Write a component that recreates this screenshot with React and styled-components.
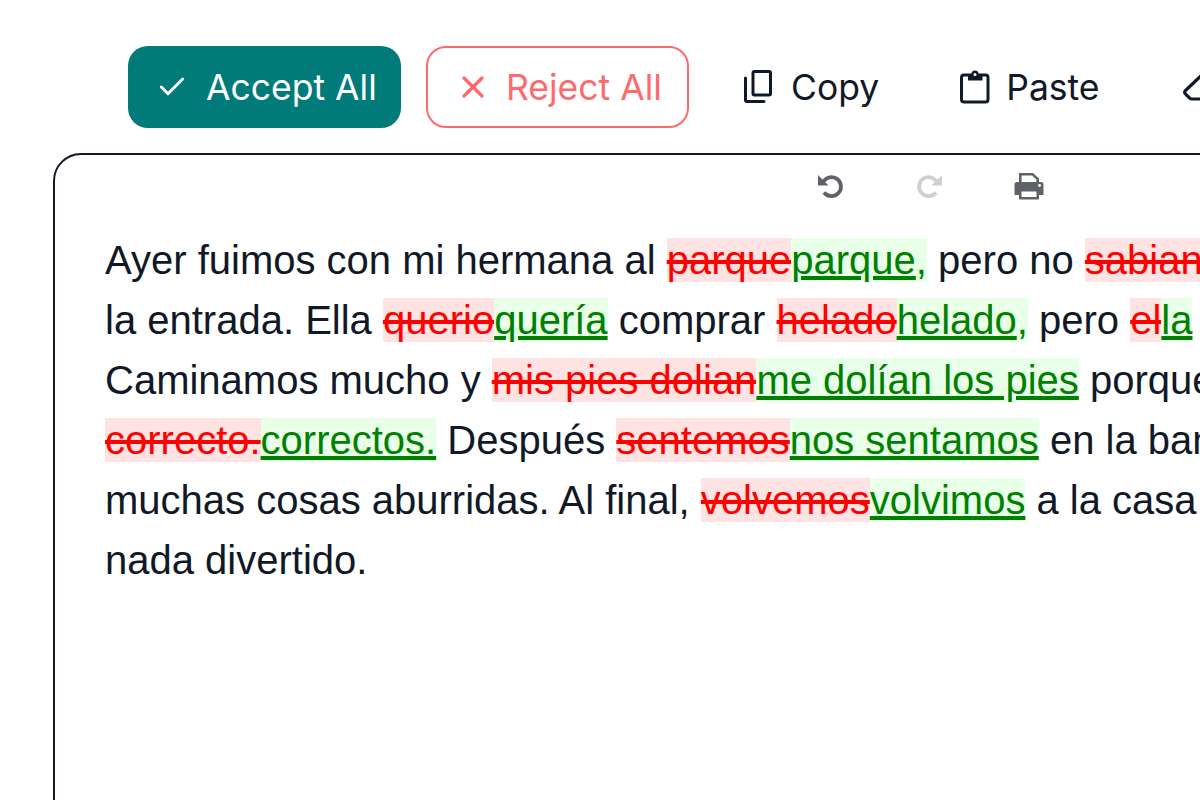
import React from 'react'
import styled, { createGlobalStyle } from 'styled-components'
import { Check, X } from 'lucide-react'

const GlobalStyle = createGlobalStyle`
  html, body {
    margin: 0;
    width: 1200px;
    height: 800px;
    overflow: hidden;
    background: #fff;
  }
`

const lines = [
  ['Ayer fuimos con mi hermana al ', { del: 'parque', ins: 'parque', tail: ',' }, ' pero no ', { del: 'sabian', ins: 'sabíamos' }],
  ['la entrada. Ella ', { del: 'querio', ins: 'quería' }, ' comprar ', { del: 'helado', ins: 'helado', tail: ',' }, ' pero ', { del: 'el', ins: 'la' }],
  ['Caminamos mucho y ', { del: 'mis pies dolian', ins: 'me dolían los pies' }, ' porque'],
  [{ del: 'correcto.', ins: 'correctos.' }, ' Después ', { del: 'sentemos', ins: 'nos sentamos' }, ' en la banca'],
  ['muchas cosas aburridas. Al final, ', { del: 'volvemos', ins: 'volvimos' }, ' a la casa'],
  ['nada divertido.'],
]

function CopyIcon() {
  return (
    <svg width="28" height="34" viewBox="0 0 28 34" fill="none" stroke="#111827" strokeWidth="3" strokeLinejoin="round" strokeLinecap="round">
      <rect x="9" y="1.500" width="17.500" height="23.500" rx="1.500" />
      <path d="M1.500 8v22a1.500 1.500 0 0 0 1.500 1.500H20" />
    </svg>
  )
}

function PasteIcon() {
  return (
    <svg width="30" height="34" viewBox="0 0 30 34" fill="none">
      <rect x="1.500" y="5" width="26.500" height="27" rx="2.500" stroke="#111827" strokeWidth="3" />
      <path d="M8 4h3.500a3.500 3.500 0 0 1 7 0H22.500v6.500H8z" fill="#111827" />
      <circle cx="15" cy="4.500" r="1.500" fill="#fff" />
    </svg>
  )
}

function EraserIcon() {
  return (
    <svg width="36" height="34" viewBox="0 0 36 34" fill="none" stroke="#111827" strokeWidth="3.200" strokeLinecap="round" strokeLinejoin="round">
      <path d="M24 2L4.500 20.500a2.500 2.500 0 0 0 0 3.500L8.500 28a3 3 0 0 0 2 1H34" />
    </svg>
  )
}

function UndoIcon({ color }) {
  return (
    <svg width="28" height="28" viewBox="0 0 28 28" fill="none">
      <path d="M6.500 11.500a9.500 9.500 0 1 1 1.500 9" stroke={color} strokeWidth="3.800" />
      <path d="M2 3v10.500h10.500z" fill={color} />
    </svg>
  )
}

function PrintIcon() {
  return (
    <svg width="30" height="28" viewBox="0 0 30 28">
      <path d="M5 11V1h14l6 5.500V11h-2.600V7.500L18 3.600H7.600V11z" fill="#5f6368" />
      <path d="M3 10h24a2.500 2.500 0 0 1 2.500 2.500V23H24v-5H6v5H.5V12.500A2.500 2.500 0 0 1 3 10z" fill="#5f6368" />
      <path d="M5 18h20v8.500a1 1 0 0 1-1 1H6a1 1 0 0 1-1-1z" fill="#5f6368" />
      <path d="M7.500 19.500h15v5.500h-15z" fill="#fff" />
      <circle cx="25.500" cy="13.500" r="1.400" fill="#fff" />
    </svg>
  )
}

export default function App() {
  return (
    <Page>
      <GlobalStyle />
      <Toolbar>
        <AcceptButton><Check size={32} strokeWidth={2.2} /> Accept All</AcceptButton>
        <RejectButton><X size={36} strokeWidth={2.2} /> Reject All</RejectButton>
        <PlainButton $gap={19}><CopyIcon /> Copy</PlainButton>
        <PlainButton $gap={16}><PasteIcon /> Paste</PlainButton>
        <PlainButton $gap={19}><EraserIcon /> Clear</PlainButton>
      </Toolbar>
      <Editor>
        <History>
          <UndoIcon color="#5f6368" />
          <Flipped><UndoIcon color="#cfcfcf" /></Flipped>
          <PrintIcon />
        </History>
        <Body>
          {lines.map((line, i) => (
            <Line key={i}>
              {line.map((part, j) => typeof part === 'string' ? (
                <span key={j}>{part}</span>
              ) : (
                <span key={j}>
                  <Del>{part.del}</Del>
                  <InsWrap><Ins>{part.ins}</Ins>{part.tail}</InsWrap>
                </span>
              ))}
            </Line>
          ))}
        </Body>
      </Editor>
    </Page>
  )
}

const Page = styled.div`
  width: 1600px;
  padding: 46px 0 0 53px;
`

const Toolbar = styled.div`
  display: flex;
  align-items: center;
  height: 82px;
  padding-left: 75px;
  gap: 25px;
`

const BaseButton = styled.div`
  display: flex;
  align-items: center;
  box-sizing: border-box;
  height: 82px;
  font-family: Inter, sans-serif;
  font-size: 35.5px;
  font-weight: 400;
  white-space: nowrap;
`

const AcceptButton = styled(BaseButton)`
  width: 273px;
  padding-left: 28px;
  gap: 18px;
  background: #017a7a;
  color: #fff;
  border-radius: 20px;
`

const RejectButton = styled(BaseButton)`
  width: 263px;
  padding-left: 27px;
  gap: 15px;
  border: 2px solid #fd6a6d;
  color: #fd6a6d;
  border-radius: 20px;
`

const PlainButton = styled(BaseButton)`
  padding: 0 26px 0 30px;
  gap: ${props => props.$gap}px;
  color: #111827;
`

const Editor = styled.div`
  box-sizing: border-box;
  margin-top: 25px;
  width: 1500px;
  height: 900px;
  border: 2px solid #111827;
  border-radius: 28px;
  padding: 15px 0 0 50px;
`

const History = styled.div`
  display: flex;
  align-items: center;
  gap: 71px;
  height: 32px;
  padding-left: 711px;
`

const Flipped = styled.span`
  display: flex;
  transform: translateX(1px) scaleX(-1);
`

const Body = styled.div`
  margin-top: 28px;
  font-family: "Liberation Sans", Arial, sans-serif;
  font-size: 40px;
  line-height: 60px;
  color: #111827;
`

const Line = styled.div`
  white-space: pre;
  height: 60px;
`

const Del = styled.span`
  background: #ffe3e3;
  color: #ff0000;
  text-decoration: line-through;
`

const InsWrap = styled.span`
  background: #e8ffe8;
  color: #008000;
`

const Ins = styled.span`
  text-decoration: underline;
`
